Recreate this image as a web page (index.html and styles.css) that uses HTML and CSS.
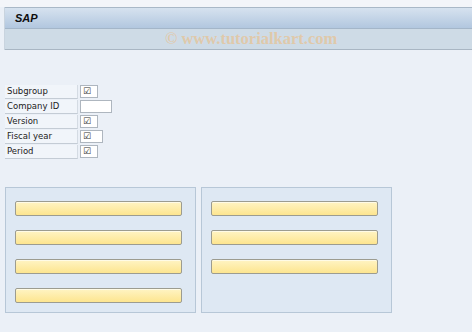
FILE: index.html
```html
<!DOCTYPE html>
<html>
<head>
<meta charset="utf-8">
<link rel="stylesheet" href="styles.css">
</head>
<body>
<div class="page">
  <div class="topstrip"></div>
  <div class="header">
    <div class="titlebar"><span class="title">SAP</span></div>
    <div class="toolbar"><span class="watermark">© www.tutorialkart.com</span></div>
  </div>
  <div class="form">
    <div class="row"><div class="label">Subgroup</div><div class="field chk"><span class="tick">&#9745;</span></div></div>
    <div class="row"><div class="label">Company ID</div><div class="field wide"></div></div>
    <div class="row"><div class="label">Version</div><div class="field chk"><span class="tick">&#9745;</span></div></div>
    <div class="row"><div class="label">Fiscal year</div><div class="field mid"><span class="tick">&#9745;</span></div></div>
    <div class="row"><div class="label">Period</div><div class="field chk"><span class="tick">&#9745;</span></div></div>
  </div>
  <div class="groups">
    <div class="box">
      <div class="btn"></div>
      <div class="btn"></div>
      <div class="btn"></div>
      <div class="btn"></div>
    </div>
    <div class="box">
      <div class="btn"></div>
      <div class="btn"></div>
      <div class="btn"></div>
    </div>
  </div>
</div>
</body>
</html>
```
FILE: styles.css
```css
html, body {
  margin: 0;
  padding: 0;
  background: #ffffff;
}
.page {
  width: 472px;
  height: 332px;
  background: #ebf0f7;
  font-family: "DejaVu Sans", "Liberation Sans", sans-serif;
  overflow: hidden;
}
.topstrip {
  height: 7px;
  background: #f3f5f9;
}
.header {
  margin-left: 4px;
  border-left: 1px solid #c9d4df;
}
.titlebar {
  height: 20px;
  border-top: 1px solid #a9b8c7;
  border-bottom: 1px solid #a4b6c9;
  background: linear-gradient(#d6e2ef, #b2c7df);
  display: flex;
  align-items: center;
  padding-left: 10px;
}
.title {
  font-family: "Liberation Sans", Arial, sans-serif;
  font-weight: bold;
  font-style: italic;
  font-size: 11px;
  color: #0d0d0d;
}
.toolbar {
  height: 20px;
  background: #cedbe6;
  border-bottom: 1px solid #a9b6c3;
  display: flex;
  align-items: center;
  padding-left: 160px;
}
.watermark {
  font-family: "Liberation Serif", "DejaVu Serif", serif;
  font-weight: bold;
  font-size: 16.5px;
  color: rgba(238, 186, 118, 0.55);
}
.form {
  margin-top: 34px;
  margin-left: 5px;
  display: flex;
  flex-direction: column;
}
.row {
  height: 15px;
  display: flex;
  align-items: center;
}
.label {
  width: 70px;
  height: 13px;
  line-height: 13px;
  padding-left: 2px;
  font-size: 8.5px;
  color: #222;
  background: #f1f5fa;
  border-bottom: 1px solid #c4ccd5;
  border-right: 1px solid #d4dbe3;
}
.field {
  margin-left: 2px;
  height: 11px;
  background: #ffffff;
  border: 1px solid #aeb6bf;
  display: flex;
  align-items: center;
  padding-left: 2px;
}
.chk { width: 14px; }
.mid { width: 19px; }
.wide { width: 28px; }
.tick {
  font-size: 9px;
  line-height: 9px;
  color: #333;
}
.groups {
  margin-top: 28px;
  margin-left: 5px;
  display: flex;
  gap: 5px;
}
.box {
  width: 167px;
  height: 111px;
  background: #dee8f3;
  border: 1px solid #b7c7d7;
  padding: 13px 13px 0 9px;
  display: flex;
  flex-direction: column;
  gap: 14px;
}
.btn {
  height: 13px;
  background: linear-gradient(#fff4c4, #fde58f);
  border: 1px solid #9c9c90;
  border-radius: 2px;
  box-shadow: inset 0 1px 0 #fffbe6;
}
```
